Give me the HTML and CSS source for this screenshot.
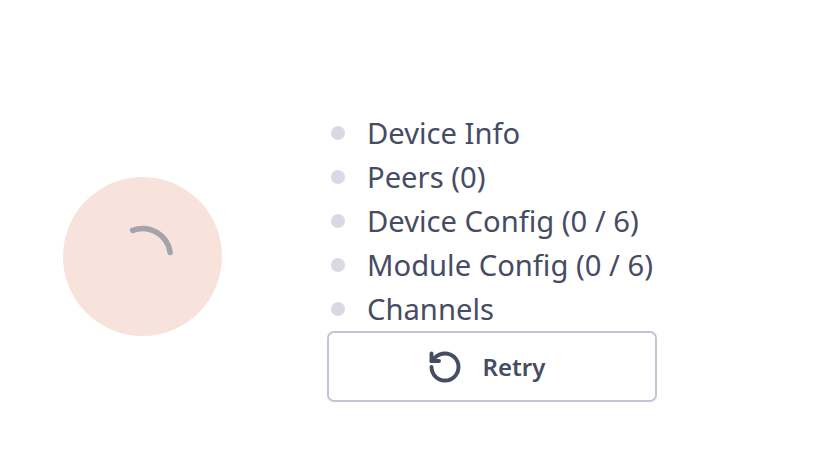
FILE: index.html
```html
<!DOCTYPE html>
<html lang="en">
<head>
  <meta charset="UTF-8">
  <meta name="viewport" content="width=device-width, initial-scale=1.0">
  <title>Connecting</title>
  <link rel="stylesheet" href="styles.css">
</head>
<body>
  <div class="container">
    <div class="status-circle">
      <svg class="spinner" width="159" height="159" viewBox="0 0 159 159">
        <path d="M69.700 53.300 A28 28 0 0 1 107.200 75.500" />
      </svg>
    </div>
    <div class="steps">
      <ul class="step-list">
        <li>Device Info</li>
        <li>Peers (0)</li>
        <li>Device Config (0 / 6)</li>
        <li>Module Config (0 / 6)</li>
        <li>Channels</li>
      </ul>
      <button class="button">
        <svg width="36" height="36" viewBox="0 0 24 24">
          <path d="M3 12a9 9 0 1 0 9-9 9.750 9.750 0 0 0-6.740 2.740L3 8" />
          <path d="M3 3v5h5" />
        </svg>
        <span>Retry</span>
      </button>
    </div>
  </div>
</body>
</html>
```

FILE: styles.css
```css
body {
  margin: 0;
  font-family: "Noto Sans", "Open Sans", sans-serif;
  background: #ffffff;
  color: #464c64;
  height: 475px;
  overflow: hidden;
}

.container {
  display: flex;
  align-items: center;
  gap: 105px;
  padding: 110px 0 0 63px;
}

.status-circle {
  width: 159px;
  height: 159px;
  border-radius: 50%;
  background: #f7e2dc;
}

.spinner path {
  fill: none;
  stroke: #a3a3a9;
  stroke-width: 5.500;
  stroke-linecap: round;
}

.steps {
  width: 330px;
}

.step-list {
  list-style: none;
  margin: 0;
  padding: 1px 0 0;
}

.step-list li {
  display: flex;
  align-items: center;
  gap: 22px;
  height: 44px;
  font-size: 29.200px;
  white-space: nowrap;
}

.step-list li::before {
  content: "";
  width: 14px;
  height: 14px;
  margin-left: 4px;
  border-radius: 50%;
  background: #d7d9e4;
}

.button {
  display: flex;
  justify-content: center;
  align-items: center;
  gap: 20px;
  width: 100%;
  height: 71px;
  box-sizing: border-box;
  padding: 0 12px 0 0;
  background: #ffffff;
  color: #464c64;
  border: 2px solid #c3c5d6;
  border-radius: 7px;
  font-family: inherit;
  font-size: 24px;
  font-weight: 600;
}

.button svg {
  fill: none;
  stroke: #464c64;
  stroke-width: 2.600;
  stroke-linecap: round;
  stroke-linejoin: round;
}
```
